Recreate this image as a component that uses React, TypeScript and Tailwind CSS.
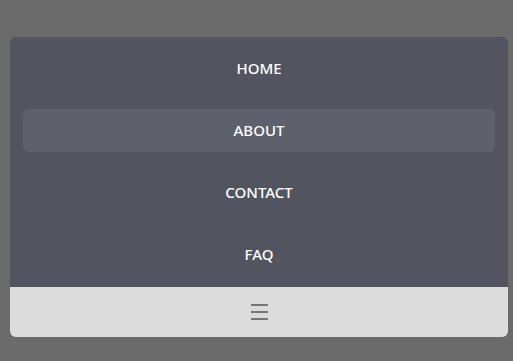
const items = ['HOME', 'ABOUT', 'CONTACT', 'FAQ']
const active = 'ABOUT'

export default function App() {
  return (
    <div className="min-h-[361px] w-full bg-[#6b6b6b] pt-[37px] pl-[10px]">
      <div
        className="w-[498px] rounded-md overflow-hidden"
        style={{ fontFamily: '"Noto Sans", "Open Sans", sans-serif' }}
      >
        <nav className="bg-[#52545f] pt-[10px] pb-[11px] px-[13px] flex flex-col gap-[19px]">
          {items.map((item) => (
            <a
              key={item}
              href="#"
              className={`h-[43px] flex items-center justify-center rounded-md text-[15px] font-medium text-white ${
                item === active ? 'bg-[#5e606c]' : ''
              }`}
            >
              {item}
            </a>
          ))}
        </nav>
        <button
          type="button"
          className="h-[50px] w-full bg-[#dcdcdc] flex items-center justify-center"
          aria-label="Toggle menu"
        >
          <svg width="17" height="16" viewBox="0 0 17 16">
            <g stroke="#555555" strokeWidth="1.6">
              <line x1="0" y1="1" x2="17" y2="1" />
              <line x1="0" y1="8" x2="17" y2="8" />
              <line x1="0" y1="15" x2="17" y2="15" />
            </g>
          </svg>
        </button>
      </div>
    </div>
  )
}
